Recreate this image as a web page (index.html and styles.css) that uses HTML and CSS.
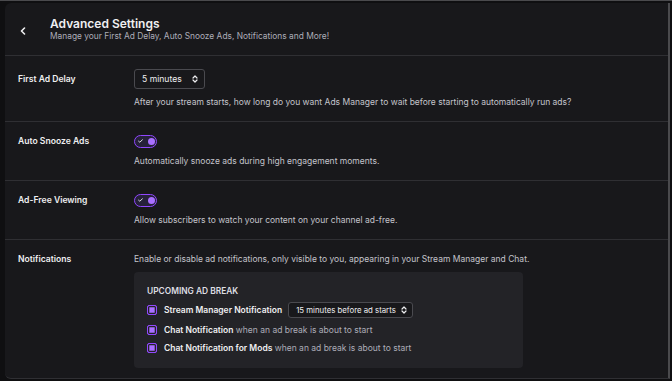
FILE: index.html
```html
<!DOCTYPE html>
<html lang="en">
<head>
    <meta charset="UTF-8">
    <title>Advanced Settings</title>
    <link rel="stylesheet" href="styles.css">
</head>
<body>
<div class="panel">
    <div class="header">
        <button class="back" aria-label="Back">
            <svg width="6" height="8" viewBox="0 0 6 8"><path d="M4.5 1 L1.5 4 L4.5 7" fill="none" stroke="#efeff1" stroke-width="1.6" stroke-linecap="round" stroke-linejoin="round"/></svg>
        </button>
        <div>
            <div class="title">Advanced Settings</div>
            <div class="subtitle">Manage your First Ad Delay, Auto Snooze Ads, Notifications and More!</div>
        </div>
    </div>

    <div class="row">
        <div class="label label-select">First Ad Delay</div>
        <div class="content">
            <div class="select select-delay">
                <span>5 minutes</span>
                <svg class="arrows" width="6" height="8" viewBox="0 0 6 8"><path d="M1 3 L3 1 L5 3 M1 5 L3 7 L5 5" fill="none" stroke="#efeff1" stroke-width="1.2" stroke-linecap="round" stroke-linejoin="round"/></svg>
            </div>
            <div class="desc">After your stream starts, how long do you want Ads Manager to wait before starting to automatically run ads?</div>
        </div>
    </div>

    <div class="row">
        <div class="label label-toggle">Auto Snooze Ads</div>
        <div class="content">
            <div class="toggle">
                <svg class="tick" width="5" height="4" viewBox="0 0 5 4"><path d="M0.6 2.2 L1.8 3.2 L4.4 0.8" fill="none" stroke="#dcdce0" stroke-width="1" stroke-linecap="round"/></svg>
                <span class="knob"></span>
            </div>
            <div class="desc">Automatically snooze ads during high engagement moments.</div>
        </div>
    </div>

    <div class="row">
        <div class="label label-toggle">Ad-Free Viewing</div>
        <div class="content">
            <div class="toggle">
                <svg class="tick" width="5" height="4" viewBox="0 0 5 4"><path d="M0.6 2.2 L1.8 3.2 L4.4 0.8" fill="none" stroke="#dcdce0" stroke-width="1" stroke-linecap="round"/></svg>
                <span class="knob"></span>
            </div>
            <div class="desc">Allow subscribers to watch your content on your channel ad-free.</div>
        </div>
    </div>

    <div class="row row-last">
        <div class="label">Notifications</div>
        <div class="content">
            <div class="desc desc-top">Enable or disable ad notifications, only visible to you, appearing in your Stream Manager and Chat.</div>
            <div class="notify-box">
                <div class="box-title">UPCOMING AD BREAK</div>
                <div class="check-row">
                    <span class="checkbox"></span>
                    <span class="check-label"><b>Stream Manager Notification</b></span>
                    <div class="select select-small">
                        <span>15 minutes before ad starts</span>
                        <svg class="arrows" width="6" height="8" viewBox="0 0 6 8"><path d="M1 3 L3 1 L5 3 M1 5 L3 7 L5 5" fill="none" stroke="#efeff1" stroke-width="1.2" stroke-linecap="round" stroke-linejoin="round"/></svg>
                    </div>
                </div>
                <div class="check-row">
                    <span class="checkbox"></span>
                    <span class="check-label"><b>Chat Notification</b> when an ad break is about to start</span>
                </div>
                <div class="check-row">
                    <span class="checkbox"></span>
                    <span class="check-label"><b>Chat Notification for Mods</b> when an ad break is about to start</span>
                </div>
            </div>
        </div>
    </div>
</div>
</body>
</html>
```

FILE: styles.css
```css
html, body {
    margin: 0;
    height: 100%;
}
body {
    background: #0f0f11;
    border-top: 1px solid #4a4a4d;
    box-sizing: border-box;
    font-family: Inter, "Noto Sans", sans-serif;
    color: #efeff1;
    overflow: hidden;
}
.panel {
    margin: 2px 0 0 5px;
    width: 665px;
    height: 376px;
    box-sizing: border-box;
    background: #18181b;
    border-right: 2px solid #4a4a4d;
    border-bottom: 1px solid #2f2f33;
    border-radius: 6px 0 0 6px;
}
.header {
    display: flex;
    align-items: center;
    padding: 13px 0 13px 13px;
    height: 52px;
    box-sizing: border-box;
}
.back {
    background: none;
    border: none;
    padding: 0;
    width: 30px;
    display: flex;
    align-items: center;
    justify-content: flex-start;
    margin-left: 2px;
    margin-top: 4px;
}
.title {
    font-size: 12px;
    font-weight: 600;
    line-height: 14px;
}
.subtitle {
    font-size: 8.4px;
    line-height: 11px;
    color: #adadb8;
}
.row {
    display: flex;
    border-top: 1px solid #2f2f33;
    padding: 13px 0 13px 13px;
}
.label {
    width: 116px;
    flex-shrink: 0;
    font-size: 8.6px;
    font-weight: 600;
    line-height: 11px;
}
.label-select {
    line-height: 20px;
}
.label-toggle {
    line-height: 13px;
}
.content {
    flex: 1;
}
.desc {
    margin-top: 8px;
    font-size: 8.5px;
    line-height: 11px;
    color: #c4c4cb;
}
.desc-top {
    margin-top: 0;
}
.select {
    display: flex;
    align-items: center;
    justify-content: space-between;
    box-sizing: border-box;
    border: 1px solid #4a4a4f;
    border-radius: 3px;
    background: #18181b;
    font-size: 8.6px;
    color: #efeff1;
    white-space: nowrap;
}
.select-delay {
    width: 71px;
    height: 20px;
    padding: 0 6px 0 7px;
}
.select-small {
    width: 125px;
    height: 16px;
    padding: 0 5px 0 7px;
    margin-left: 6px;
    font-size: 7.8px;
}
.toggle {
    position: relative;
    width: 23px;
    height: 13px;
    box-sizing: border-box;
    border: 1.5px solid #9147ff;
    border-radius: 7px;
    background: #26213a;
}
.tick {
    position: absolute;
    left: 3px;
    top: 3px;
}
.knob {
    position: absolute;
    right: 1.5px;
    top: 1.5px;
    width: 7px;
    height: 7px;
    border-radius: 50%;
    background: #a970ff;
}
.row-last {
    padding-top: 14px;
}
.notify-box {
    margin-top: 7px;
    width: 389px;
    box-sizing: border-box;
    background: #232327;
    border-radius: 4px;
    padding: 14px 13px 14px;
}
.box-title {
    font-size: 8.4px;
    font-weight: 600;
    line-height: 10px;
    color: #dedee3;
    margin-bottom: 6px;
}
.check-row {
    display: flex;
    align-items: center;
    min-height: 12px;
    margin-bottom: 6px;
    font-size: 8.5px;
    color: #adadb8;
}
.check-row:last-child {
    margin-bottom: 0;
}
.check-row b {
    font-weight: 600;
    color: #efeff1;
}
.checkbox {
    width: 10px;
    height: 10px;
    box-sizing: border-box;
    border: 1.5px solid #9147ff;
    border-radius: 2px;
    background: #a970ff;
    box-shadow: inset 0 0 0 1.3px #232327;
    margin-right: 7px;
    flex-shrink: 0;
}
```
